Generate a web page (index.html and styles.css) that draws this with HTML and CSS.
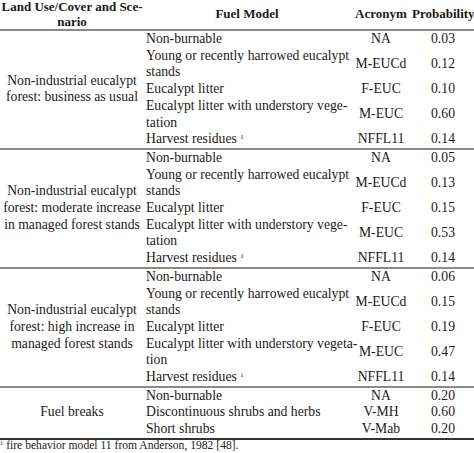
FILE: index.html
```html
<!DOCTYPE html>
<html>
<head>
<meta charset="utf-8">
<link rel="stylesheet" href="styles.css">
</head>
<body>
<table class="tbl">
  <colgroup>
    <col class="c1"><col class="c2"><col class="c3"><col class="c4">
  </colgroup>
  <thead>
    <tr>
      <th>Land Use/Cover and Sce-<br>nario</th>
      <th>Fuel Model</th>
      <th>Acronym</th>
      <th>Probability</th>
    </tr>
  </thead>
  <tbody class="grp">
    <tr><td class="scn" rowspan="5">Non-industrial eucalypt<br>forest: business as usual</td><td class="fm">Non-burnable</td><td class="ac">NA</td><td class="pr">0.03</td></tr>
    <tr><td class="fm">Young or recently harrowed eucalypt<br>stands</td><td class="ac">M-EUCd</td><td class="pr">0.12</td></tr>
    <tr><td class="fm">Eucalypt litter</td><td class="ac">F-EUC</td><td class="pr">0.10</td></tr>
    <tr><td class="fm">Eucalypt litter with understory vege-<br>tation</td><td class="ac">M-EUC</td><td class="pr">0.60</td></tr>
    <tr><td class="fm">Harvest residues <sup>1</sup></td><td class="ac">NFFL11</td><td class="pr">0.14</td></tr>
  </tbody>
  <tbody class="grp">
    <tr><td class="scn" rowspan="5">Non-industrial eucalypt<br>forest: moderate increase<br>in managed forest stands</td><td class="fm">Non-burnable</td><td class="ac">NA</td><td class="pr">0.05</td></tr>
    <tr><td class="fm">Young or recently harrowed eucalypt<br>stands</td><td class="ac">M-EUCd</td><td class="pr">0.13</td></tr>
    <tr><td class="fm">Eucalypt litter</td><td class="ac">F-EUC</td><td class="pr">0.15</td></tr>
    <tr><td class="fm">Eucalypt litter with understory vege-<br>tation</td><td class="ac">M-EUC</td><td class="pr">0.53</td></tr>
    <tr><td class="fm">Harvest residues <sup>1</sup></td><td class="ac">NFFL11</td><td class="pr">0.14</td></tr>
  </tbody>
  <tbody class="grp">
    <tr><td class="scn" rowspan="5">Non-industrial eucalypt<br>forest: high increase in<br>managed forest stands</td><td class="fm">Non-burnable</td><td class="ac">NA</td><td class="pr">0.06</td></tr>
    <tr><td class="fm">Young or recently harrowed eucalypt<br>stands</td><td class="ac">M-EUCd</td><td class="pr">0.15</td></tr>
    <tr><td class="fm">Eucalypt litter</td><td class="ac">F-EUC</td><td class="pr">0.19</td></tr>
    <tr><td class="fm">Eucalypt litter with understory vegeta-<br>tion</td><td class="ac">M-EUC</td><td class="pr">0.47</td></tr>
    <tr><td class="fm">Harvest residues <sup>1</sup></td><td class="ac">NFFL11</td><td class="pr">0.14</td></tr>
  </tbody>
  <tbody class="grp last">
    <tr><td class="scn" rowspan="3">Fuel breaks</td><td class="fm">Non-burnable</td><td class="ac">NA</td><td class="pr">0.20</td></tr>
    <tr><td class="fm">Discontinuous shrubs and herbs</td><td class="ac">V-MH</td><td class="pr">0.60</td></tr>
    <tr><td class="fm">Short shrubs</td><td class="ac">V-Mab</td><td class="pr">0.20</td></tr>
  </tbody>
</table>
<p class="note"><sup>1</sup> fire behavior model 11 from Anderson, 1982 [48].</p>
</body>
</html>
```

FILE: styles.css
```css
html, body {
  margin: 0;
  padding: 0;
  background: #ffffff;
}
body {
  font-family: "Liberation Serif", "Times New Roman", serif;
  color: #1a1a1a;
  width: 474px;
  overflow: hidden;
}
.tbl {
  width: 474px;
  table-layout: fixed;
  border-collapse: collapse;
  margin: 0;
  font-size: 13.7px;
}
.c1 { width: 144px; }
.c2 { width: 206px; }
.c3 { width: 62px; }
.c4 { width: 62px; }
th {
  font-weight: bold;
  font-size: 13px;
  line-height: 14.5px;
  padding: 0;
  text-align: center;
  vertical-align: middle;
  white-space: nowrap;
  border-bottom: 2px solid #8a8a8a;
}
td {
  padding: 0;
  line-height: 16.7px;
  white-space: nowrap;
  vertical-align: middle;
}
.scn { text-align: center; }
.fm { text-align: left; padding-left: 2px; }
.ac, .pr { text-align: center; }
.grp { border-bottom: 2px solid #8a8a8a; }
.grp.last { border-bottom: 2px solid #333333; }
sup {
  font-size: 7px;
  vertical-align: 4px;
  line-height: 0;
}
.note {
  margin: 0;
  font-size: 11.6px;
  line-height: 12px;
}
.note sup { font-size: 6.5px; }
```
